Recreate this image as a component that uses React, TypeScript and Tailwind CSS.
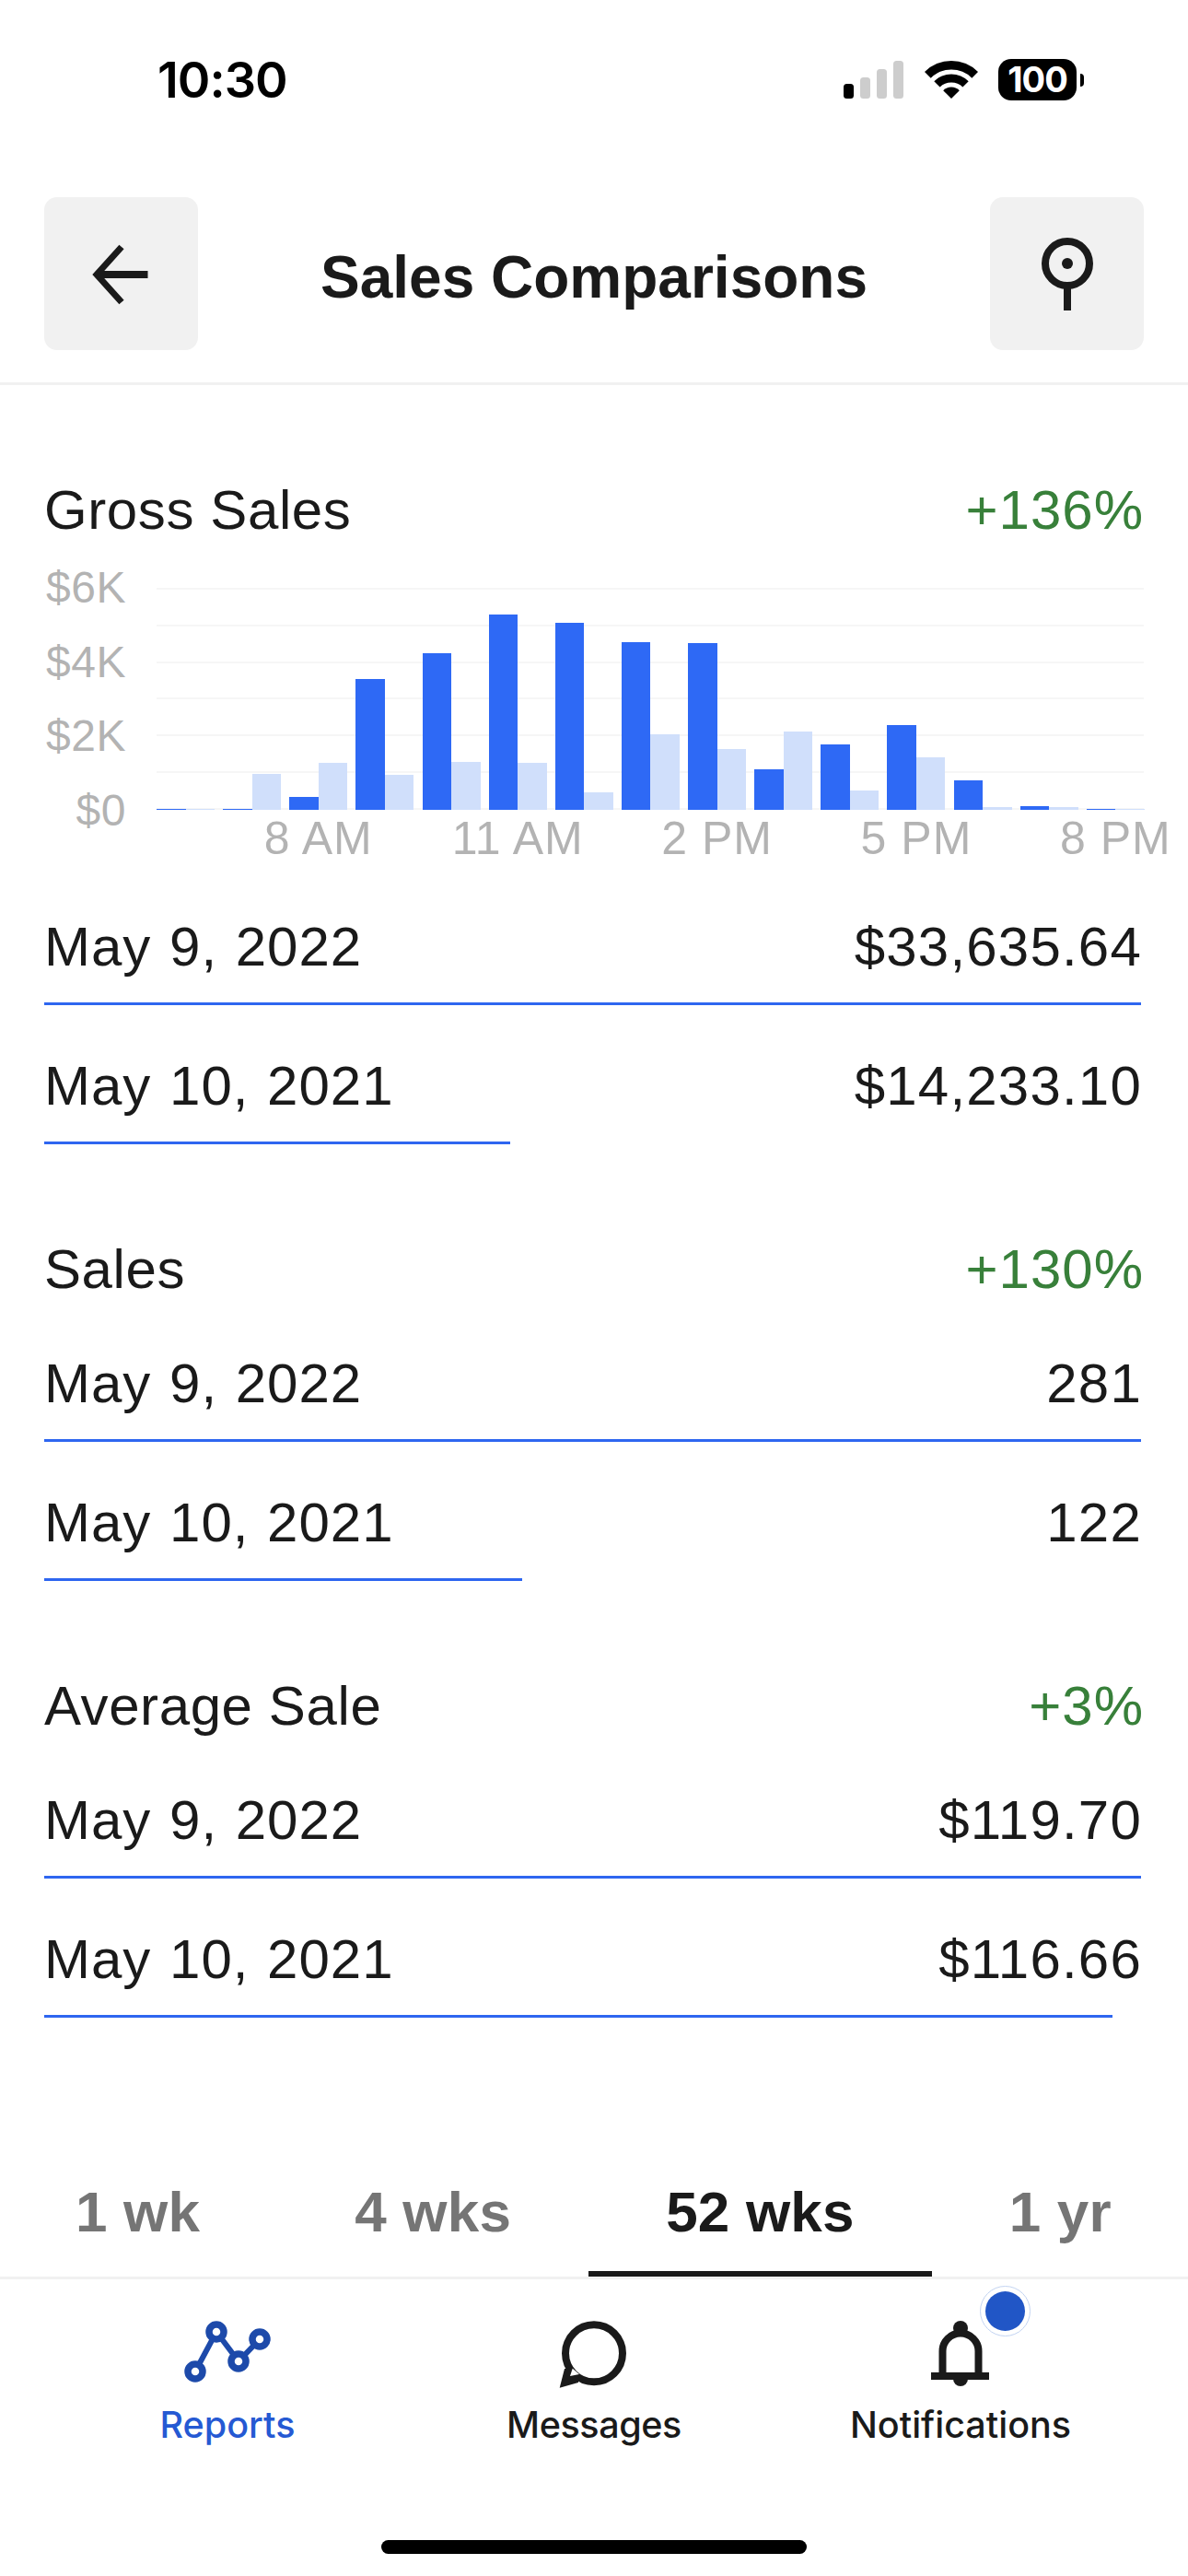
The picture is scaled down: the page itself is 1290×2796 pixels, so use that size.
const sans = "font-['Liberation_Sans',Arial,sans-serif]";

const bars = [
  [1, 1], [1, 39], [14, 51], [142, 38], [170, 52], [212, 51], [203, 19], [182, 82],
  [181, 66], [44, 85], [71, 21], [92, 57], [32, 3], [4, 3], [1, 1],
];

const xLabels: Record<number, string> = { 2: "8 AM", 5: "11 AM", 8: "2 PM", 11: "5 PM", 14: "8 PM" };

const sections = [
  { label: "Sales", change: "+130%", a: "281", b: "122", bWidth: 519 },
  { label: "Average Sale", change: "+3%", a: "$119.70", b: "$116.66", bWidth: 1160 },
];

const StatusBar = () => (
  <div className="flex h-[214px] items-start justify-between pt-[64px] pr-[113px] pl-[171px]">
    <span className="font-['Inter',sans-serif] text-[54px] leading-[45px] font-semibold tracking-[-1px] text-black">10:30</span>
    <div className="flex h-[45px] items-center">
      <svg width="65" height="45" viewBox="0 0 65 45">
        <rect x="0" y="27" width="11" height="16" rx="3.5" fill="#000" />
        <rect x="18" y="20" width="11" height="23" rx="3.5" fill="#cdcdcd" />
        <rect x="36" y="11" width="11" height="32" rx="3.5" fill="#cdcdcd" />
        <rect x="54" y="2" width="11" height="41" rx="3.5" fill="#cdcdcd" />
      </svg>
      <svg className="ml-[23px]" width="58" height="45" viewBox="0 0 58 45" fill="#000">
        <path d="M0 14A41 41 0 0 1 58 14L51.3 20.7A31.5 31.5 0 0 0 6.7 20.7Z" />
        <path d="M10.3 24.3A26.5 26.5 0 0 1 47.7 24.3L41.4 30.6A17.5 17.5 0 0 0 16.6 30.6Z" />
        <path d="M20.2 34.2A12.5 12.5 0 0 1 37.8 34.2L29 43Z" />
      </svg>
      <div className="ml-[22px] flex h-[45px] w-[85px] items-center justify-center rounded-[14px] bg-black font-['Inter',sans-serif] text-[38px] font-bold tracking-[-1px] text-white">
        100
      </div>
      <div className="ml-[4px] h-[14px] w-[4px] rounded-r-full bg-black" />
    </div>
  </div>
);

const Header = () => (
  <div className="flex items-center justify-between border-b-[3px] border-[#f1f1f1] px-12 pb-[35px]">
    <button className="flex h-[166px] w-[167px] items-center justify-center rounded-[14px] bg-[#f1f1f1]">
      <svg width="80" height="80" viewBox="0 0 80 80" fill="none" stroke="#1a1a1a" strokeWidth="7">
        <path d="M40 11L13 41L40 71" />
        <path d="M13 41H68.5" strokeWidth="8" />
      </svg>
    </button>
    <h1 className={`${sans} pt-[8px] text-[64px] leading-[72px] font-bold text-[#1a1a1a]`}>Sales Comparisons</h1>
    <button className="flex h-[166px] w-[167px] items-center justify-center rounded-[14px] bg-[#f1f1f1]">
      <svg width="80" height="80" viewBox="0 0 80 80" fill="none" stroke="#1a1a1a" strokeWidth="8">
        <circle cx="40" cy="29" r="24" />
        <circle cx="40" cy="29" r="6" fill="#1a1a1a" stroke="none" />
        <path d="M40 53V80" />
      </svg>
    </button>
  </div>
);

const TitleRow = ({ label, change }: { label: string; change: string }) => (
  <div className="flex justify-between text-[60px] leading-[72px]">
    <span className="tracking-[0.6px] text-[#1a1a1a]">{label}</span>
    <span className="tracking-[1px] text-[#38803a]">{change}</span>
  </div>
);

const CompareRow = ({ date, value, width }: { date: string; value: string; width: number }) => (
  <div className="mt-[52px]">
    <div className="flex justify-between pr-[2px] text-[60px] leading-[72px] text-[#1a1a1a]">
      <span className="tracking-[1px] [word-spacing:2px]">{date}</span>
      <span className="tracking-[1.2px]">{value}</span>
    </div>
    <div className="mt-[24px] h-[3px] bg-[#2e66f0]" style={{ width }} />
  </div>
);

const Chart = () => (
  <div className="mt-[24px] flex">
    <div className="flex h-[290px] w-[89px] shrink-0 flex-col items-end justify-between text-[48px] leading-[48px] tracking-[0.5px] text-[#b3b3b3]">
      <span>$6K</span>
      <span>$4K</span>
      <span>$2K</span>
      <span>$0</span>
    </div>
    <div className="ml-[33px] min-w-0 flex-1 pt-[24px]">
      <div className="relative h-[241px]">
        <div className="absolute inset-0 flex flex-col justify-between">
          {[0, 1, 2, 3, 4, 5, 6].map((i) => (
            <div key={i} className="h-[2px] bg-[#f6f6f6]" />
          ))}
        </div>
        <div className="relative grid h-full w-[1082px] grid-cols-[repeat(15,1fr)] items-end">
          {bars.map(([dark, light], i) => (
            <div key={i} className="flex w-[63px] items-end">
              <div className="w-1/2 bg-[#2e69f5]" style={{ height: dark }} />
              <div className="w-1/2 bg-[#d0dffb]" style={{ height: light }} />
            </div>
          ))}
        </div>
      </div>
      <div className="mt-[7px] grid w-[1082px] grid-cols-[repeat(15,1fr)] text-[50px] leading-[48px] tracking-[1px] text-[#b3b3b3]">
        {bars.map((_, i) => (
          <div key={i} className="flex w-[63px] justify-center whitespace-nowrap">
            {xLabels[i]}
          </div>
        ))}
      </div>
    </div>
  </div>
);

const Tabs = () => (
  <div className="mt-auto flex overflow-hidden border-b-[3px] border-[#f1f1f1] text-[62px] leading-[72px] font-bold tracking-[0.2px] whitespace-nowrap text-[#757575]">
    <div className="-ml-[2px] h-[106px] px-[84px]">1 wk</div>
    <div className="h-[106px] px-[84px]">4 wks</div>
    <div className="h-[106px] border-b-[6px] border-[#1a1a1a] px-[84px] text-[#1a1a1a]">52 wks</div>
    <div className="h-[106px] px-[84px]">1 yr</div>
  </div>
);

const BottomNav = () => (
  <div className="flex flex-col items-center pt-[42px] pb-[24px]">
    <div className="grid w-full grid-cols-3 px-12 font-['Inter',sans-serif] text-[39.5px] leading-[48px] font-medium text-[#1a1a1a]">
      <div className="flex flex-col items-center gap-[12px]">
        <svg width="100" height="80" viewBox="0 0 100 80" fill="none" stroke="#1d4aaa">
          <path d="M15 58L38 15L62 47L85 23" strokeWidth="6" />
          <circle cx="15" cy="58" r="8" strokeWidth="7.5" fill="#fff" />
          <circle cx="38" cy="15" r="8" strokeWidth="7.5" fill="#fff" />
          <circle cx="62" cy="47" r="8" strokeWidth="7.5" fill="#fff" />
          <circle cx="85" cy="23" r="8" strokeWidth="7.5" fill="#fff" />
        </svg>
        <span className="text-[#2559d3]">Reports</span>
      </div>
      <div className="flex flex-col items-center gap-[12px]">
        <svg width="80" height="80" viewBox="0 0 80 80" fill="none">
          <circle cx="40" cy="38.3" r="31" stroke="#1a1a1a" strokeWidth="8" />
          <path d="M8 55L2.7 75.7L23 70L24 61H14L16.7 55Z" fill="#1a1a1a" />
          <path d="M16.7 54.7L14 63L24 61Z" fill="#fff" />
        </svg>
        <span className="tracking-[-0.4px]">Messages</span>
      </div>
      <div className="flex flex-col items-center gap-[12px]">
        <div className="relative h-[80px] w-[80px]">
          <svg width="80" height="80" viewBox="0 0 80 80" fill="none" stroke="#1a1a1a">
            <circle cx="40" cy="11" r="8" fill="#1a1a1a" stroke="none" />
            <path d="M20.5 63V36A19.5 19.5 0 0 1 59.5 36V63" strokeWidth="8" />
            <rect x="8" y="59" width="63" height="8" fill="#1a1a1a" stroke="none" />
            <path d="M32 66a8 8 0 0 0 16 0Z" fill="#1a1a1a" stroke="none" />
          </svg>
          <div className="absolute -top-[35px] left-[61px] flex h-[55px] w-[55px] items-center justify-center rounded-full border border-[#c3d4f2] bg-white">
            <div className="h-[43px] w-[43px] rounded-full bg-[#2156c6]" />
          </div>
        </div>
        <span>Notifications</span>
      </div>
    </div>
    <div className="mt-[101px] h-[15px] w-[462px] rounded-full bg-black" />
  </div>
);

export default function App() {
  return (
    <div className={`${sans} flex h-[2796px] w-[1290px] flex-col overflow-hidden bg-white`}>
      <StatusBar />
      <Header />
      <main className="px-12 pt-[100px]">
        <TitleRow label="Gross Sales" change="+136%" />
        <Chart />
        <div className="pt-[6px]">
          <CompareRow date="May 9, 2022" value="$33,635.64" width={1191} />
          <CompareRow date="May 10, 2021" value="$14,233.10" width={506} />
        </div>
        {sections.map((s) => (
          <div key={s.label} className="mt-[100px]">
            <TitleRow label={s.label} change={s.change} />
            <CompareRow date="May 9, 2022" value={s.a} width={1191} />
            <CompareRow date="May 10, 2021" value={s.b} width={s.bWidth} />
          </div>
        ))}
      </main>
      <Tabs />
      <BottomNav />
    </div>
  );
}
